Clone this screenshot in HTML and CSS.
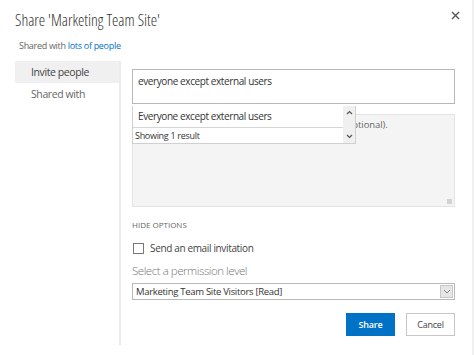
FILE: index.html
```html
<!DOCTYPE html>
<html lang="en">
<head>
    <meta charset="UTF-8">
    <title>Share 'Marketing Team Site'</title>
    <link rel="stylesheet" href="styles.css">
</head>
<body>
    <div class="dialog">
        <div class="dialog-header">
            <h1 class="dialog-title">Share 'Marketing Team Site'</h1>
            <span class="close">
                <svg width="9" height="9" viewBox="0 0 9 9"><path d="M1 1 L8 8 M8 1 L1 8" stroke="#555" stroke-width="1.4"/></svg>
            </span>
        </div>
        <p class="shared-summary">Shared with <a href="#">lots of people</a></p>

        <div class="dialog-body">
            <ul class="side-nav">
                <li class="nav-item active">Invite people</li>
                <li class="nav-item">Shared with</li>
            </ul>

            <div class="content">
                <div class="people-picker">
                    <div class="picker-input">everyone except external users</div>
                    <div class="suggestions">
                        <div class="suggestion-list">
                            <div class="suggestion">Everyone except external users</div>
                            <div class="suggestion-count">Showing 1 result</div>
                        </div>
                        <div class="suggestion-scroll">
                            <svg width="7" height="5" viewBox="0 0 7 5"><path d="M1 4 L3.5 1.5 L6 4" fill="none" stroke="#555" stroke-width="1.2"/></svg>
                            <svg width="7" height="5" viewBox="0 0 7 5"><path d="M1 1 L3.5 3.5 L6 1" fill="none" stroke="#555" stroke-width="1.2"/></svg>
                        </div>
                    </div>
                </div>

                <div class="message-box">
                    <span class="placeholder">Include a personal message with this invitation (Optional).</span>
                    <span class="grip"></span>
                </div>

                <div class="hide-options">HIDE OPTIONS</div>

                <label class="check-row">
                    <span class="checkbox"></span>
                    Send an email invitation
                </label>

                <div class="perm-label">Select a permission level</div>
                <div class="perm-select">
                    <span>Marketing Team Site Visitors [Read]</span>
                    <span class="select-arrow">
                        <svg width="8" height="5" viewBox="0 0 8 5"><path d="M1 1 L4 4 L7 1" fill="none" stroke="#888" stroke-width="1"/></svg>
                    </span>
                </div>

                <div class="buttons">
                    <button class="btn btn-primary">Share</button>
                    <button class="btn">Cancel</button>
                </div>
            </div>
        </div>
    </div>
</body>
</html>
```

FILE: styles.css
```css
/* General */
body {
    margin: 0;
    padding: 0;
    background: #fff;
    font-family: 'Open Sans', 'Noto Sans', sans-serif;
    color: #333;
    width: 474px;
    height: 355px;
    overflow: hidden;
}

.dialog {
    padding: 0 17px 0 15px;
    border-right: 2px solid #f0f0f0;
    height: 355px;
    box-sizing: border-box;
}

/* Header */
.dialog-header {
    display: flex;
    justify-content: space-between;
    align-items: flex-start;
    padding-top: 8px;
}

.dialog-title {
    margin: 0;
    font-size: 16px;
    font-weight: 300;
    font-stretch: 75%;
    color: #333;
    line-height: 24px;
}

.close {
    display: flex;
    margin-top: 3px;
    margin-right: -5px;
}

.shared-summary {
    margin: 7px 0 0 4px;
    font-size: 9px;
    letter-spacing: -0.3px;
    color: #666;
    line-height: 14px;
}

.shared-summary a {
    color: #0072c6;
    text-decoration: none;
}

/* Body */
.dialog-body {
    display: flex;
    margin-top: 8px;
}

.side-nav {
    list-style: none;
    margin: 0;
    padding: 0;
    width: 104px;
    border-right: 2px solid #ebebeb;
    height: 284px;
}

.nav-item {
    font-size: 10.5px;
    letter-spacing: -0.4px;
    color: #666;
    padding: 0 0 0 16px;
    height: 22px;
    line-height: 22px;
}

.nav-item.active {
    background: #f0f0f0;
    color: #444;
}

.content {
    flex: 1;
    padding: 8px 0 0 11px;
}

/* People picker */
.people-picker {
    position: relative;
}

.picker-input {
    height: 35px;
    border: 1px solid #b8b8b8;
    font-size: 10px;
    letter-spacing: -0.4px;
    line-height: 16px;
    color: #333;
    padding: 3px 0 0 5px;
    box-sizing: border-box;
}

.suggestions {
    position: absolute;
    top: 37px;
    left: 0;
    width: 224px;
    height: 38px;
    display: flex;
    background: #fff;
    border: 1px solid #d0d0d0;
    border-top: none;
    box-sizing: border-box;
    z-index: 2;
}

.suggestion-list {
    flex: 1;
}

.suggestion {
    height: 21px;
    line-height: 21px;
    font-size: 10px;
    letter-spacing: -0.4px;
    padding-left: 5px;
    border-bottom: 1px solid #d6d6d6;
}

.suggestion-count {
    height: 15px;
    line-height: 15px;
    font-size: 9px;
    letter-spacing: -0.3px;
    padding-left: 2px;
    color: #333;
}

.suggestion-scroll {
    width: 12px;
    background: #f0f0f0;
    display: flex;
    flex-direction: column;
    justify-content: space-between;
    align-items: center;
    padding: 4px 0;
    box-sizing: border-box;
}

/* Message box */
.message-box {
    position: relative;
    margin-top: 10px;
    height: 93px;
    background: #f4f4f4;
    border: 1px solid #e3e3e3;
    box-sizing: border-box;
    padding: 3px 5px;
    font-size: 9.5px;
    letter-spacing: -0.1px;
    line-height: 14px;
    color: #666;
    overflow: hidden;
}

.placeholder {
    white-space: nowrap;
}

.grip {
    position: absolute;
    right: 2px;
    bottom: 2px;
    width: 5px;
    height: 5px;
    background: radial-gradient(circle, #aaa 0.6px, transparent 0.8px) 0 0 / 2px 2px;
}

/* Options */
.hide-options {
    margin-top: 12px;
    font-size: 8px;
    line-height: 12px;
    color: #666;
}

.check-row {
    display: flex;
    align-items: center;
    gap: 6px;
    height: 12px;
    margin-top: 11px;
    font-size: 10px;
    letter-spacing: -0.35px;
    color: #444;
}

.checkbox {
    width: 9px;
    height: 9px;
    border: 1px solid #777;
    background: #fff;
    margin-left: 1px;
}

.perm-label {
    margin-top: 9px;
    font-size: 11.5px;
    letter-spacing: -0.45px;
    line-height: 16px;
    font-weight: 300;
    color: #777;
}

.perm-select {
    margin-top: 4px;
    height: 17px;
    border: 1px solid #b8b8b8;
    box-sizing: border-box;
    display: flex;
    justify-content: space-between;
    align-items: center;
    font-size: 9.5px;
    letter-spacing: -0.3px;
    color: #333;
    padding-left: 3px;
}

.select-arrow {
    width: 13px;
    height: 13px;
    margin-right: 1px;
    background: #e6e6e6;
    border: 1px solid #c8c8c8;
    box-sizing: border-box;
    display: flex;
    align-items: center;
    justify-content: center;
}

/* Buttons */
.buttons {
    display: flex;
    justify-content: flex-end;
    gap: 11px;
    margin-top: 13px;
}

.btn {
    width: 49px;
    height: 23px;
    font-family: inherit;
    font-size: 9px;
    letter-spacing: -0.2px;
    background: #fff;
    color: #444;
    border: 1px solid #c6c6c6;
    padding: 0;
}

.btn-primary {
    background: #0072c6;
    border-color: #0072c6;
    color: #fff;
    font-weight: 600;
}
```
